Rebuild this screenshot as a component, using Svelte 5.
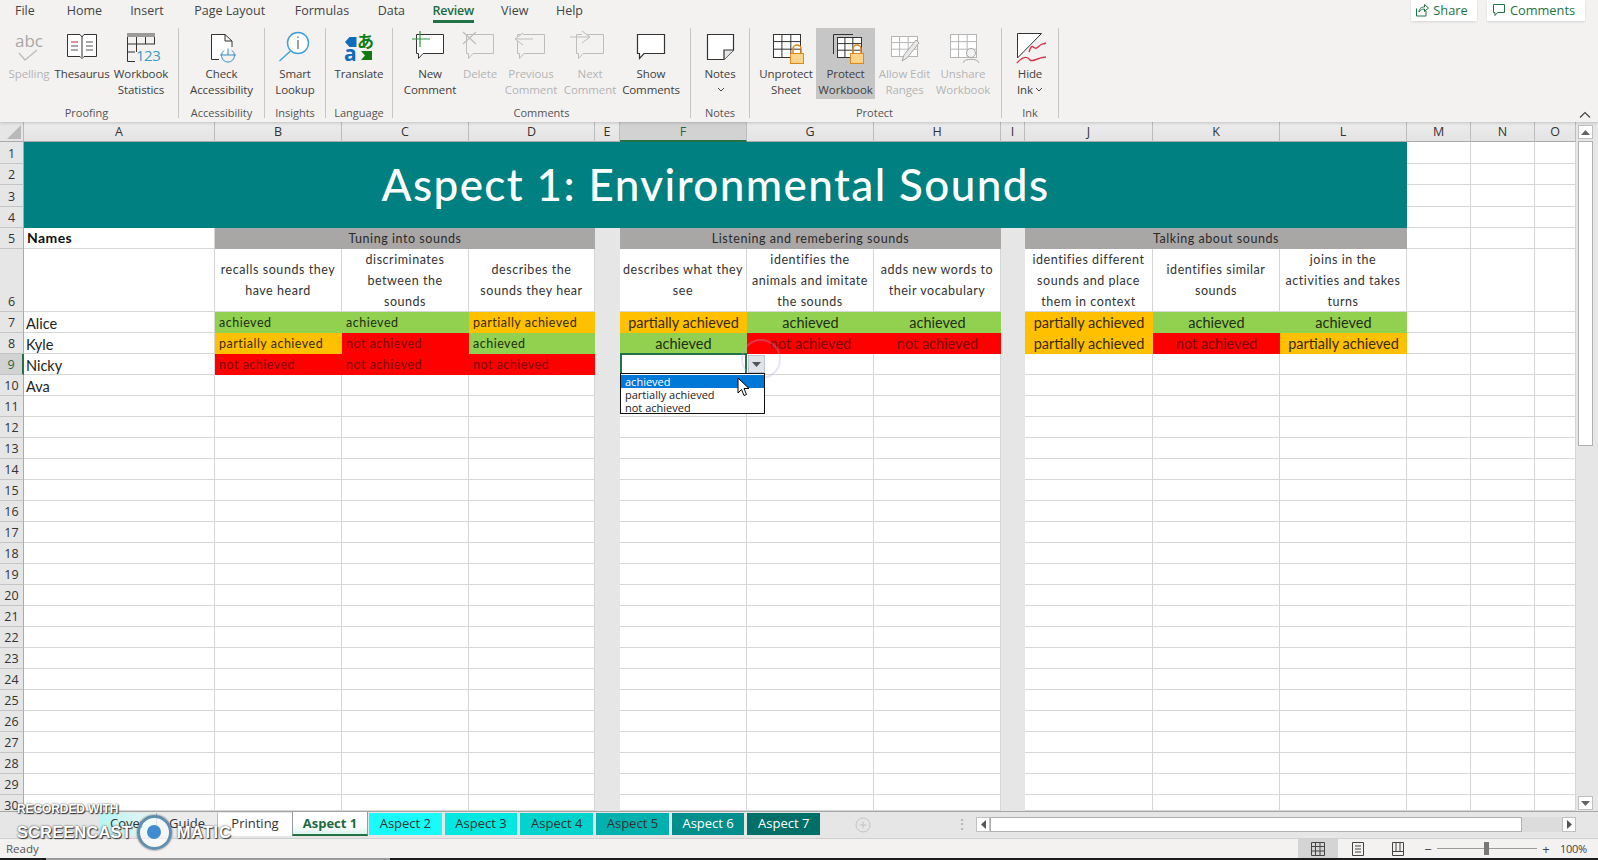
<script>
  const tabs = [['File',15],['Home',32],['Insert',28],['Page Layout',30.5],['Formulas',29.5],['Data',28.5],['Review',27.5],['View',27],['Help',27.5]];
  const groups = [
    { label:'Proofing', width:179, pl:3, lr:8, buttons:[
      {icon:'spelling', w:52, lines:['Spelling'], dis:true},
      {icon:'thesaurus', w:54, lines:['Thesaurus']},
      {icon:'stats', w:64, lines:['Workbook','Statistics']}]},
    { label:'Accessibility', width:86, pl:0, lr:0, buttons:[{icon:'access', w:85, lines:['Check','Accessibility']}]},
    { label:'Insights', width:61, pl:0, lr:0, buttons:[{icon:'smart', w:60, lines:['Smart','Lookup']}]},
    { label:'Language', width:67, pl:0, lr:0, buttons:[{icon:'translate', w:66, lines:['Translate']}]},
    { label:'Comments', width:298, pl:12, lr:12, buttons:[
      {icon:'new', w:50, lines:['New','Comment']},
      {icon:'delete', w:50, lines:['Delete'], dis:true},
      {icon:'prev', w:52, lines:['Previous','Comment'], dis:true},
      {icon:'next', w:66, lines:['Next','Comment'], dis:true},
      {icon:'show', w:56, lines:['Show','Comments']}]},
    { label:'Notes', width:59, pl:0, lr:0, buttons:[{icon:'notes', w:58, lines:['Notes'], chev:'below'}]},
    { label:'Protect', width:252, pl:6, lr:8, buttons:[
      {icon:'unprotect', w:60, lines:['Unprotect','Sheet']},
      {icon:'protect', w:59, lines:['Protect','Workbook'], active:true},
      {icon:'allow', w:59, lines:['Allow Edit','Ranges'], dis:true},
      {icon:'unshare', w:58, lines:['Unshare','Workbook'], dis:true}]},
    { label:'Ink', width:57, pl:0, lr:0, buttons:[{icon:'ink', w:56, lines:['Hide','Ink'], chev:'inline'}]}
  ];

  const letters = 'ABCDEFGHIJKLMNO'.split('');
  const cells = [];
  let k = 0;
  const push = (t, c) => cells.push({ id: k++, t, c });

  push('', 'corner');
  for (const l of letters) push(l, 'colh' + (l === 'F' ? ' colsel' : ''));
  push('', 'title');
  const blank = () => { for (const _ of ['M','N','O']) push('', 'cell'); };
  for (let r = 1; r <= 4; r++) { push(String(r), 'rowh'); blank(); }

  push('5', 'rowh');
  push('Names', 'cell names');
  push('Tuning into sounds', 'ghead s3');
  push('', 'gap');
  push('Listening and remebering sounds', 'ghead s3');
  push('', 'gap');
  push('Talking about sounds', 'ghead s3');
  blank();

  push('6', 'rowh r6');
  push('', 'cell');
  ['recalls sounds they\nhave heard','discriminates\nbetween the\nsounds','describes the\nsounds they hear'].forEach(t => push(t,'cell desc'));
  push('', 'gap');
  ['describes what they\nsee','identifies the\nanimals and imitate\nthe sounds','adds new words to\ntheir vocabulary'].forEach(t => push(t,'cell desc'));
  push('', 'gap');
  ['identifies different\nsounds and place\nthem in context','identifies similar\nsounds','joins in the\nactivities and takes\nturns'].forEach(t => push(t,'cell desc'));
  blank();

  const S = { a:['achieved','ok'], p:['partially achieved','part'], n:['not achieved','no'] };
  const data = [
    ['Alice','aap','paa','paa'],
    ['Kyle','pna','ann','pnp'],
    ['Nicky','nnn','_','' ],
    ['Ava','','','']
  ];
  data.forEach((d, i) => {
    const r = 7 + i;
    push(String(r), 'rowh' + (r === 9 ? ' rowsel' : ''));
    push(d[0], 'cell name');
    for (let j = 0; j < 3; j++) { const s = S[d[1][j]]; s ? push(s[0], 'left ' + s[1]) : push('', 'cell'); }
    push('', 'gap');
    for (let j = 0; j < 3; j++) {
      if (d[2] === '_' && j === 0) { push('', 'cell sel'); continue; }
      const s = S[d[2][j]]; s ? push(s[0], 'mid ' + s[1]) : push('', 'cell');
    }
    push('', 'gap');
    for (let j = 0; j < 3; j++) { const s = S[d[3][j]]; s ? push(s[0], 'mid ' + s[1]) : push('', 'cell'); }
    blank();
  });
  for (let r = 11; r <= 30; r++) {
    push(String(r), 'rowh' + (r === 30 ? ' r30' : ''));
    letters.forEach(l => push('', (l === 'E' || l === 'I') ? 'gap' : 'cell'));
  }

  const sheets = [
    ['Cover','t-cover'],['Guide','t-guide'],['Printing','t-print'],['Aspect 1','t-act'],
    ['Aspect 2','t2'],['Aspect 3','t3'],['Aspect 4','t4'],['Aspect 5','t5'],['Aspect 6','t6'],['Aspect 7','t7']
  ];
  const bubble = 'M8.5 4.5H35.5V23.5H15L10.5 28.5V23.5H8.5Z';
</script>

{#snippet gridIcon(x, y, w, h, color)}
  <rect x={x+.5} y={y+.5} width={w} height={h} fill="#fff" stroke={color}/>
  <path d="M{x} {y+h*.33}H{x+w}M{x} {y+h*.66}H{x+w}M{x+w*.33} {y}V{y+h}M{x+w*.66} {y}V{y+h}" stroke={color} fill="none"/>
{/snippet}

{#snippet lock()}
  <path d="M29 23v-4a4 4 0 0 1 8 0v4" fill="none" stroke="#e08a1e" stroke-width="1.6"/>
  <rect x="26.5" y="23.5" width="13" height="10" fill="#fbd38a" stroke="#e08a1e"/>
{/snippet}

<div class="app">
  <header class="ribbon">
    <div class="tabrow">
      <nav class="tabs">
        {#each tabs as t}
          <span class="tab" class:on={t[0] === 'Review'} style="margin-left:{t[1]}px">{t[0]}</span>
        {/each}
      </nav>
      <div class="actions">
        <span class="act share">
          <svg width="14" height="14" viewBox="0 0 14 14" fill="none" stroke="#217346"><path d="M1.5 5.5V13H11V8M4 9C4 5 7 4 9.5 4V1.5L13.5 5 9.5 8.500V6C7 6 5 7 4 9Z"/></svg>
          Share
        </span>
        <span class="act comments">
          <svg width="14" height="14" viewBox="0 0 14 14" fill="none" stroke="#217346"><path d="M1.500 1.500H12.500V9.500H5.500L3 12.500V9.500H1.500Z"/></svg>
          Comments
        </span>
      </div>
    </div>
    <div class="body">
      {#each groups as g}
        <section class="group" style="width:{g.width}px;padding-left:{g.pl}px">
          <div class="btns">
            {#each g.buttons as b}
              <div class="btn" class:dis={b.dis} class:active={b.active} style="width:{b.w}px">
                <svg class="ico" width="44" height="36" viewBox="0 0 44 36" fill="none">
                  {#if b.icon === 'spelling'}
                    <text x="22" y="17" text-anchor="middle" class="abc">abc</text>
                    <path d="M12 23l6 7L30 20" stroke="#bdbdbd" stroke-width="1.3"/>
                  {:else if b.icon === 'thesaurus'}
                    <path d="M22 7L20 4.500H7.500V26.500H20L22 28.500 24 26.500H36.500V4.500H24ZM22 7V27" fill="#fff" stroke="#333"/>
                    <path d="M11 12h7" stroke="#c8202c"/><path d="M11 16h7M11 20h7M26 12h7M26 16h7M26 20h7" stroke="#555"/>
                  {:else if b.icon === 'stats'}
                    <rect x="8" y="3" width="28" height="4" fill="#9a9a9a"/>
                    <path d="M8.500 7V31.500H16M8 14H36M8 22H16M17.500 7V22M26.500 7V14M35.500 7V14" stroke="#333"/>
                    <text x="17" y="31" class="n123">123</text>
                  {:else if b.icon === 'access'}
                    <path d="M19 29.500H11.500V4.500H25L32 11V17M25 4.500V11H32" stroke="#333" fill="#fff"/>
                    <path d="M24 20.500A6.500 6.500 0 1 0 32 20.500M28 18.500V25M20 25H36" stroke="#3a8fc5"/>
                  {:else if b.icon === 'smart'}
                    <circle cx="25" cy="13" r="10.500" stroke="#3f9fd8" stroke-width="1.400" fill="#fff"/>
                    <path d="M17.500 21L6.500 31" stroke="#3f9fd8" stroke-width="1.400"/>
                    <path d="M25 10V19M25 6.500V8" stroke="#444"/>
                  {:else if b.icon === 'translate'}
                    <polygon points="19.500,7 19.500,17 12.500,17 8,12 12.500,7" fill="#0f6cbd"/>
                    <text x="20" y="18" class="kana">あ</text>
                    <text x="7" y="31" class="latin">a</text>
                    <polygon points="24,21 35,21 35,30 24,30 28,25.500" fill="#107c10"/>
                  {:else if b.icon === 'new'}
                    <path d={bubble} fill="#fff" stroke="#333"/>
                    <path d="M12 1V17M4 9H22" stroke="#2c9a3f" stroke-width="1.200"/>
                  {:else if b.icon === 'delete'}
                    <path d={bubble} fill="#f3f2f1" stroke="#bdbdbd"/>
                    <path d="M5 2L18 14M18 2L5 14" stroke="#bdbdbd" stroke-width="1.200"/>
                  {:else if b.icon === 'prev'}
                    <path d={bubble} fill="#f3f2f1" stroke="#bdbdbd"/>
                    <path d="M14 3L6 9L14 15M6 9H24" stroke="#bdbdbd" fill="#f3f2f1"/>
                  {:else if b.icon === 'next'}
                    <path d={bubble} fill="#f3f2f1" stroke="#bdbdbd"/>
                    <path d="M14 1L22 7L14 13M2 7H22" stroke="#bdbdbd" fill="#f3f2f1"/>
                  {:else if b.icon === 'show'}
                    <path d={bubble} fill="#fff" stroke="#333" stroke-width="1.200"/>
                  {:else if b.icon === 'notes'}
                    <path d="M9.500 4.500H35.500V20L26 29.500H9.500Z" fill="#fff" stroke="#333" stroke-width="1.200"/>
                    <path d="M35.500 20H26V29.500" stroke="#333" stroke-width="1.200" fill="#e6e6e6"/>
                  {:else if b.icon === 'unprotect'}
                    {@render gridIcon(9, 4, 27, 23, '#333')}
                    {@render lock()}
                  {:else if b.icon === 'protect'}
                    <path d="M9.500 24V4.500H29" stroke="#333"/>
                    {@render gridIcon(13, 7, 24, 20, '#333')}
                    {@render lock()}
                  {:else if b.icon === 'allow'}
                    {@render gridIcon(8, 6, 26, 20, '#b5b5b5')}
                    <path d="M36 13L24 28L19 31L21 25L33 10Z" fill="#e8e8e8" stroke="#a8a8a8"/>
                  {:else if b.icon === 'unshare'}
                    {@render gridIcon(9, 4, 26, 23, '#b5b5b5')}
                    <circle cx="30" cy="23" r="4.500" fill="#f3f2f1" stroke="#a8a8a8"/>
                    <path d="M22 33C23 28 37 28 38 33" fill="#f3f2f1" stroke="#a8a8a8"/>
                  {:else if b.icon === 'ink'}
                    <path d="M9.500 28V3.500H33.500Z" fill="#fff" stroke="#333"/>
                    <path d="M21 22C25 10 25 22 30 17S34 15 38 13M9 33C16 25 20 27 22 30S30 27 38 27" stroke="#d8344a" stroke-width="1.400"/>
                  {/if}
                </svg>
                <div class="lbl">
                  {#each b.lines as line, i}
                    <span class="ln">{line}{#if b.chev === 'inline' && i === 1}<svg class="chev" width="8" height="5" viewBox="0 0 8 5" fill="none" stroke="#444"><path d="M1 1l3 3 3-3"/></svg>{/if}</span>
                  {/each}
                  {#if b.chev === 'below'}<span class="ln"><svg class="chev" width="8" height="5" viewBox="0 0 8 5" fill="none" stroke="#444"><path d="M1 1l3 3 3-3"/></svg></span>{/if}
                </div>
              </div>
            {/each}
          </div>
          <div class="glabel" style="padding-right:{g.lr}px">{g.label}</div>
        </section>
      {/each}
      <svg class="collapse" width="14" height="8" viewBox="0 0 14 8" fill="none" stroke="#444" stroke-width="1.200"><path d="M2 6.500L7 1.500L12 6.500"/></svg>
    </div>
  </header>

  <main class="sheetwrap">
    <div class="grid">
      {#each cells as c (c.id)}
        {#if c.c === 'title'}
          <div class="title">Aspect 1: Environmental Sounds</div>
        {:else if c.c === 'corner'}
          <div class="corner"><svg width="14" height="14" viewBox="0 0 14 14"><polygon points="14,0 14,14 0,14" fill="#b9b9b9"/></svg></div>
        {:else if c.c === 'cell sel'}
          <div class="sel">
            <span class="halo"></span>
            <span class="handle"><svg width="9" height="5" viewBox="0 0 9 5"><polygon points="0,0 9,0 4.500,5" fill="#555"/></svg></span>
            <ul class="list">
              <li class="hi">achieved</li>
              <li>partially achieved</li>
              <li>not achieved</li>
            </ul>
            <svg class="cursor" width="14" height="20" viewBox="0 0 14 20"><path d="M1 1V16L4.500 12.500L7 18.500L9.500 17.500L7 11.500H12Z" fill="#fff" stroke="#000"/></svg>
          </div>
        {:else}
          <div class={c.c}>{c.t}</div>
        {/if}
      {/each}
    </div>
    <aside class="vscroll">
      <div class="sb top"><svg width="9" height="5" viewBox="0 0 9 5"><polygon points="0,5 9,5 4.500,0" fill="#666"/></svg></div>
      <div class="thumb"></div>
      <div class="track"></div>
      <div class="sb bot"><svg width="9" height="5" viewBox="0 0 9 5"><polygon points="0,0 9,0 4.500,5" fill="#666"/></svg></div>
    </aside>
  </main>

  <div class="sheetbar">
    <div class="stabs">
      {#each sheets as s}
        <span class="stab {s[1]}">{s[0]}</span>
      {/each}
    </div>
    <svg class="addsheet" width="16" height="16" viewBox="0 0 16 16" fill="none" stroke="#c4c4c4"><circle cx="8" cy="8" r="7"/><path d="M8 4.500V11.500M4.500 8H11.500"/></svg>
    <span class="dots">⋮</span>
    <div class="hscroll">
      <span class="hbtn"><svg width="5" height="9" viewBox="0 0 5 9"><polygon points="5,0 5,9 0,4.500" fill="#555"/></svg></span>
      <span class="hthumb"></span>
      <span class="htrack"></span>
      <span class="hbtn right"><svg width="5" height="9" viewBox="0 0 5 9"><polygon points="0,0 0,9 5,4.500" fill="#555"/></svg></span>
    </div>
  </div>

  <footer class="status">
    <span class="ready">Ready</span>
    <div class="views">
      <span class="view on"><svg width="16" height="16" viewBox="0 0 16 16" fill="none" stroke="#444"><path d="M1.500 1.500H14.500V14.500H1.500ZM1.500 5.500H14.500M1.500 10H14.500M5.500 1.500V14.500M10 1.500V14.500"/></svg></span>
      <span class="view"><svg width="14" height="16" viewBox="0 0 14 16" fill="none" stroke="#444"><path d="M1.500 1.500H12.500V14.500H1.500ZM4 5H10M4 8H10M4 11H10"/></svg></span>
      <span class="view"><svg width="14" height="16" viewBox="0 0 14 16" fill="none" stroke="#444"><path d="M1.500 1.500H12.500V14.500H1.500ZM1.500 10.500H12.500M5 1.500V10.500M9 1.500V10.500"/></svg></span>
    </div>
    <div class="zoomctl">
      <span class="zb">−</span>
      <span class="slider"><span class="knob"></span></span>
      <span class="zb">+</span>
      <span class="pct">100%</span>
    </div>
  </footer>
  <div class="strip"></div>

  <div class="watermark">
    <div class="wm1">RECORDED WITH</div>
    <div class="wm2">
      <span>SCREENCAST</span>
      <span class="wmo"><span class="wmdot"></span></span>
      <span class="wm3">MATIC</span>
    </div>
  </div>
</div>

<style>
  :global(body) { margin: 0; background: #f3f2f1; }
  .app { position: relative; width: 1598px; height: 860px; overflow: hidden; display: flex; flex-direction: column; font-family: "Open Sans", sans-serif; color: #333; }

  .ribbon { height: 122px; flex: none; background: #f3f2f1; box-shadow: 0 1px 3px rgba(0,0,0,.18); position: relative; z-index: 2; display: flex; flex-direction: column; }
  .tabrow { height: 23px; display: flex; justify-content: space-between; flex: none; }
  .tabs { display: flex; font-size: 12.5px; }
  .tab { line-height: 21px; height: 20px; color: #444; }
  .tab.on { color: #1d6a41; font-weight: 600; border-bottom: 3px solid #217346; letter-spacing: -.2px; }
  .actions { display: flex; gap: 10px; padding-right: 13px; }
  .act { height: 21px; background: #fff; color: #217346; font-size: 12.8px; display: flex; align-items: center; justify-content: center; gap: 4px; box-shadow: 0 1px 2px rgba(0,0,0,.12); padding-bottom: 2px; box-sizing: border-box; }
  .share { width: 66px; padding-right: 5px; }
  .comments { width: 98px; padding-right: 5px; }

  .body { flex: 1; display: flex; padding-top: 5px; position: relative; }
  .group { box-sizing: border-box; border-right: 1px solid #c8c6c4; height: 90px; display: flex; flex-direction: column; flex: none; }
  .btns { display: flex; height: 71px; flex: none; }
  .btn { height: 71px; padding-top: 2px; box-sizing: border-box; display: flex; flex-direction: column; align-items: center; flex: none; }
  .btn.active { background: #c6c6c6; }
  .ico { display: block; flex: none; overflow: visible; }
  .lbl { display: flex; flex-direction: column; align-items: center; font-size: 11.5px; line-height: 16px; color: #404040; white-space: nowrap; letter-spacing: -.1px; }
  .btn.dis .lbl { color: #b4b4b4; }
  .ln { height: 16px; display: block; }
  .chev { margin-left: 2px; vertical-align: 2px; }
  .glabel { margin-top: 6px; text-align: center; font-size: 11px; line-height: 16px; color: #555; }
  .abc { font: 17px "Open Sans", sans-serif; fill: #a8a8a8; }
  .n123 { font: 15px "Open Sans", sans-serif; fill: #3a9bc9; letter-spacing: -.5px; }
  .kana { font: 700 17px "Noto Sans CJK JP", sans-serif; fill: #107c10; }
  .latin { font: 700 21px "Open Sans", sans-serif; fill: #0f6cbd; }
  .collapse { position: absolute; right: 6px; bottom: 3px; }

  .sheetwrap { height: 689px; flex: none; display: flex; background: #e6e6e6; }
  .grid { width: 1576px; height: 689px; flex: none; overflow: hidden; background: #fff; display: grid;
    grid-template-columns: 24px 191px 127px 127px 126px 25px 127px 127px 127px 24px 128px 127px 127px 64px 64px 41px;
    grid-template-rows: 20px repeat(4, 21.5px) 21px 63px repeat(23, 21px) 16px;
    font-family: Lato, sans-serif; color: #222; }
  .grid > div { box-sizing: border-box; min-width: 0; }

  .corner { background: #e6e6e6; border-right: 1px solid #bbb; border-bottom: 1px solid #aaa; display: flex; align-items: flex-end; justify-content: flex-end; padding: 0 2px 2px 0; }
  .colh { background: linear-gradient(#ececec, #e4e4e4); border-right: 1px solid #bdbdbd; border-bottom: 1px solid #aaa; text-align: center; font: 12.5px/19px "Open Sans", sans-serif; color: #333; }
  .colsel { background: #d2d2d2; border-bottom: 2px solid #217346; color: #1d6a41; }
  .rowh { background: #e6e6e6; border-right: 1px solid #aaa; border-bottom: 1px solid #c4c4c4; text-align: center; font: 12.5px/18px "Open Sans", sans-serif; color: #333; display: flex; align-items: flex-end; justify-content: center; overflow: hidden; }
  .r30 { align-items: flex-start; border-bottom: 0; line-height: 21px; }
  .rowsel { background: #d2d2d2; border-right: 2px solid #217346; color: #1d6a41; }
  .title { grid-column: 2 / 14; grid-row: 2 / 6; background: #008080; color: #fff; font: 500 44px/85px Lato, sans-serif; letter-spacing: 1.4px; text-align: center; }
  .cell { border-right: 1px solid #d6d6d6; border-bottom: 1px solid #d6d6d6; }
  .names { font: 700 14px/20px Lato, sans-serif; letter-spacing: .4px; padding-left: 3px; color: #111; }
  .name { font: 14.5px/23px Lato, sans-serif; padding-left: 2px; }
  .ghead { grid-column: span 3; background: #a9a6a6; text-align: center; font: 12.5px/22px Lato, sans-serif; letter-spacing: .55px; color: #2a2a2a; }
  .gap { background: #e6e6e6; }
  .desc { display: flex; align-items: center; justify-content: center; text-align: center; white-space: pre; font: 12.5px/21px Lato, sans-serif; letter-spacing: .55px; color: #333; }
  .left { font: 12.5px/21px Lato, sans-serif; letter-spacing: .5px; padding-left: 4px; white-space: nowrap; overflow: hidden; }
  .mid { font: 14.5px/22px Lato, sans-serif; text-align: center; white-space: nowrap; }
  .ok { background: #92d050; color: #1e2e10; }
  .part { background: #ffc000; color: #3a2a00; }
  .no { background: #ff0000; color: #7c0808; }
  .grid > .sel { position: relative; z-index: 5; border: 2px solid #217346; background: #fff; margin: -1px 0 -1px 0; }

  .halo { position: absolute; left: 119px; top: -16px; width: 40px; height: 40px; box-sizing: border-box; border-radius: 50%; border: 2px solid rgba(170,170,225,.3); pointer-events: none; }
  .handle { position: absolute; left: 126px; top: 0; width: 17px; height: 18px; box-sizing: border-box; background: #dfe3ea; border: 1px solid #c0c4cc; display: flex; align-items: center; justify-content: center; }
  .list { position: absolute; left: -2px; top: 18px; width: 145px; height: 41px; box-sizing: border-box; margin: 0; padding: 1px 0 0; list-style: none; background: #fff; border: 1.500px solid #111; font: 11px/13px "Open Sans", sans-serif; color: #222; }
  .list li { padding-left: 4px; height: 13px; }
  .list .hi { background: #0078d7; color: #fff; }
  .cursor { position: absolute; left: 115px; top: 22px; }

  .vscroll { width: 22px; flex: none; display: flex; flex-direction: column; align-items: center; padding: 3px 3px 1px 0; box-sizing: border-box; background: #e6e6e6; }
  .sb { width: 15px; height: 14px; flex: none; background: #fff; border: 1px solid #c0c0c0; box-sizing: border-box; display: flex; align-items: center; justify-content: center; }
  .thumb { width: 15px; height: 305px; flex: none; margin-top: 2px; box-sizing: border-box; background: #fff; border: 1px solid #b0b0b0; }
  .track { flex: 1; }

  .sheetbar { height: 28px; flex: none; box-sizing: border-box; background: #e6e6e6; border-top: 1px solid #a6a6a6; border-bottom: 1px solid #d0d0d0; display: flex; align-items: flex-start; position: relative; }
  .stabs { display: flex; padding-left: 99px; height: 25px; width: 821px; flex: none; box-sizing: content-box; }
  .stab { box-sizing: border-box; height: 23px; margin-top: 1px; text-align: center; font: 13px/21px "Open Sans", sans-serif; color: #333; flex: none; white-space: nowrap; }
  .t-cover { width: 57px; background: linear-gradient(90deg, #b7f6f3, #e8f4f3); }
  .t-guide { width: 62px; background: #ececec; border-left: 1px solid #bbb; border-right: 1px solid #bbb; }
  .t-print { width: 74px; background: #fff; }
  .t-act { width: 76px; margin-top: 0; height: 24px; background: linear-gradient(#fff 60%, #dff3ee); color: #1d6a41; font-weight: 700; border-bottom: 2px solid #217346; border-left: 1px solid #999; border-right: 1px solid #999; line-height: 23px; }
  .t2, .t3, .t4, .t5, .t6, .t7 { width: 72.7px; margin: 1px 1.500px 0; height: 22px; }
  .t2 { background: #19fbfb; margin-left: 1px; }
  .t3 { background: #00e8e0; }
  .t4 { background: #00d2cc; }
  .t5 { background: #00b1ae; }
  .t6 { background: #008f8c; color: #fff; }
  .t7 { background: #006f68; color: #fff; }
  .addsheet { flex: none; margin: 5px 0 0 0; position: absolute; left: 855px; }
  .dots { position: absolute; left: 955px; top: 2px; color: #aaa; font-size: 14px; line-height: 20px; }
  .hscroll { position: absolute; left: 976px; top: 5px; width: 600px; height: 15px; display: flex; }
  .hbtn { width: 14px; height: 15px; box-sizing: border-box; background: #fff; border: 1px solid #c0c0c0; display: flex; align-items: center; justify-content: center; flex: none; }
  .hbtn.right { width: 14px; background: #fff; }
  .hthumb { width: 532px; box-sizing: border-box; background: #fff; border: 1px solid #b0b0b0; flex: none; }
  .htrack { flex: 1; background: #dcdcdc; }

  .status { height: 19px; flex: none; background: #f3f2f1; display: flex; align-items: center; position: relative; font-size: 11.5px; color: #555; }
  .ready { padding-left: 6px; }
  .views { position: absolute; left: 1298px; top: 0; display: flex; height: 19px; }
  .view { width: 40px; height: 19px; display: flex; align-items: center; justify-content: center; }
  .view.on { background: #d4d4d4; }
  .zoomctl { position: absolute; left: 1423px; top: 0; height: 19px; display: flex; align-items: center; color: #444; }
  .zb { width: 10px; text-align: center; font-size: 13px; }
  .slider { width: 100px; height: 1px; margin: 0 4px; background: #9c9c9c; position: relative; }
  .knob { position: absolute; left: 47px; top: -6px; width: 5px; height: 13px; background: #777; }
  .pct { margin-left: 9px; font-size: 11px; letter-spacing: -.3px; }
  .strip { height: 2px; flex: none; background: linear-gradient(90deg, #1c1c1c 46px, #9a9a9a 46px, #9a9a9a 390px, #1c1c1c 390px); }

  .watermark { position: absolute; left: 17px; top: 803px; color: #fff; font-family: "Liberation Sans", sans-serif; font-weight: 700; text-shadow: 0 0 2px #333, 1px 1px 1px #333; pointer-events: none; }
  .wm1 { font-size: 12px; line-height: 13px; letter-spacing: -.1px; }
  .wm2 { display: flex; align-items: center; font-size: 16.5px; line-height: 20px; margin-top: 4px; height: 24px; letter-spacing: .1px; }
  .wmo { width: 35px; height: 35px; box-sizing: border-box; border-radius: 50%; border: 3.500px solid #5f8fae; background: rgba(255,255,255,.55); margin: 0 5px; display: flex; align-items: center; justify-content: center; flex: none; box-shadow: 0 0 2px #555; }
  .wmdot { width: 14px; height: 14px; border-radius: 50%; background: #3f8cd0; }
  .wm3 { letter-spacing: .8px; }
</style>
